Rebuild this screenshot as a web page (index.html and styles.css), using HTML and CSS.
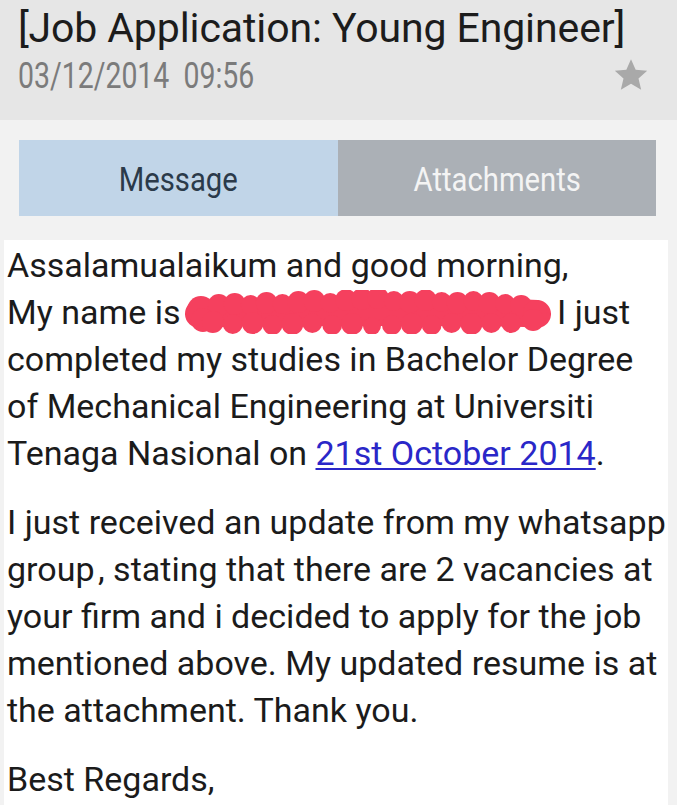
FILE: index.html
```html
<!DOCTYPE html>
<html>
<head>
<meta charset="utf-8">
<link rel="stylesheet" href="styles.css">
</head>
<body>
<div class="screen">
  <header class="head">
    <h1 class="subject">[Job Application: Young Engineer]</h1>
    <div class="meta">
      <span class="date">03/12/2014&nbsp; 09:56</span>
      <svg class="star" viewBox="0 0 24 24" width="40" height="40"><path d="M12 2.6l2.8 6.3 6.9.6-5.2 4.6 1.6 6.8L12 17.3l-6.1 3.6 1.6-6.8-5.2-4.6 6.9-.6z" fill="#a9a9a9"/></svg>
    </div>
  </header>
  <div class="tabs">
    <div class="tab tab-active"><span class="tab-label">Message</span></div>
    <div class="tab tab-idle"><span class="tab-label">Attachments</span></div>
  </div>
  <div class="body">
    <p class="para">Assalamualaikum and good morning,<br>My name is<svg class="redact" viewBox="0 0 372 44" width="372" height="44"><g fill="#f5405e"><path d="M16 24 C60 22,100 22,140 22 S230 22,270 22 S330 22,356 24" fill="none" stroke="#f5405e" stroke-width="28" stroke-linecap="round"/><circle cx="18" cy="20" r="14"/><circle cx="36" cy="15" r="11"/><circle cx="52" cy="14" r="11"/><circle cx="68" cy="15" r="10"/><circle cx="84" cy="13" r="11"/><circle cx="100" cy="14" r="10"/><circle cx="116" cy="12" r="11"/><circle cx="132" cy="11" r="11"/><circle cx="148" cy="13" r="10"/><circle cx="164" cy="10" r="11"/><circle cx="180" cy="9" r="11"/><circle cx="196" cy="8" r="11"/><circle cx="212" cy="11" r="10"/><circle cx="228" cy="12" r="11"/><circle cx="244" cy="10" r="11"/><circle cx="260" cy="12" r="10"/><circle cx="276" cy="13" r="11"/><circle cx="292" cy="11" r="10"/><circle cx="308" cy="13" r="11"/><circle cx="324" cy="14" r="10"/><circle cx="340" cy="16" r="11"/><circle cx="354" cy="22" r="12"/><circle cx="20" cy="30" r="12"/><circle cx="30" cy="32" r="11"/><circle cx="50" cy="34" r="10"/><circle cx="70" cy="33" r="11"/><circle cx="90" cy="35" r="10"/><circle cx="110" cy="34" r="11"/><circle cx="130" cy="33" r="10"/><circle cx="150" cy="35" r="10"/><circle cx="170" cy="34" r="11"/><circle cx="190" cy="36" r="9"/><circle cx="210" cy="35" r="10"/><circle cx="230" cy="34" r="11"/><circle cx="250" cy="35" r="10"/><circle cx="270" cy="33" r="10"/><circle cx="290" cy="34" r="11"/><circle cx="310" cy="33" r="10"/><circle cx="330" cy="33" r="10"/><circle cx="352" cy="30" r="11"/></g></svg> I just<br>completed my studies in Bachelor Degree<br>of Mechanical Engineering at Universiti<br>Tenaga Nasional on <a class="link" href="#">21st October 2014</a>.</p>
    <p class="para">I just received an update from my whatsapp<br>group&#8202;, stating that there are 2 vacancies at<br>your firm and i decided to apply for the job<br>mentioned above. My updated resume is at<br>the attachment. Thank you.</p>
    <p class="para">Best Regards,</p>
  </div>
</div>
</body>
</html>
```
FILE: styles.css
```css
html, body {
  margin: 0;
  padding: 0;
  background: #f2f2f2;
}
body {
  font-family: Roboto, "Liberation Sans", sans-serif;
  width: 677px;
  height: 805px;
  overflow: hidden;
}
.screen {
  display: flex;
  flex-direction: column;
}
.head {
  background: #e6e6e6;
  height: 120px;
  box-sizing: border-box;
  padding: 5px 28px 0 18px;
}
.subject {
  margin: 0;
  font-weight: 400;
  font-size: 41px;
  line-height: 46px;
  color: #1c1c1c;
  white-space: nowrap;
  letter-spacing: -0.1px;
}
.meta {
  display: flex;
  justify-content: space-between;
  align-items: center;
  height: 50px;
}
.date {
  display: inline-block;
  font-size: 36px;
  line-height: 50px;
  color: #7b7b7b;
  white-space: nowrap;
  transform: scaleX(0.79);
  transform-origin: left center;
}
.star {
  display: block;
  margin-right: -2px;
  margin-top: -2px;
}
.tabs {
  display: flex;
  margin: 20px 21px 0 19px;
  height: 76px;
}
.tab {
  flex: 1;
  display: flex;
  align-items: center;
  justify-content: center;
  font-size: 34px;
}
.tab-label {
  display: inline-block;
  transform: scaleX(0.86);
  padding-top: 2px;
}
.tab-active {
  background: #c1d5e8;
  color: #2b3a4a;
}
.tab-idle {
  background: #abb0b6;
  color: #f4f4f4;
}
.body {
  background: #ffffff;
  margin: 24px 9px 0 4px;
  padding: 2px 0 20px 3px;
  flex: 1;
}
.para {
  margin: 0 0 22px 0;
  font-size: 34px;
  line-height: 47px;
  color: #1b1b1b;
  white-space: nowrap;
}
.link {
  color: #2a27c8;
  text-decoration: underline;
  text-decoration-thickness: 2px;
  text-underline-offset: 3px;
}
.redact {
  display: inline-block;
  vertical-align: top;
  margin: 1px -4px 0 2px;
  width: 370px;
}
```
